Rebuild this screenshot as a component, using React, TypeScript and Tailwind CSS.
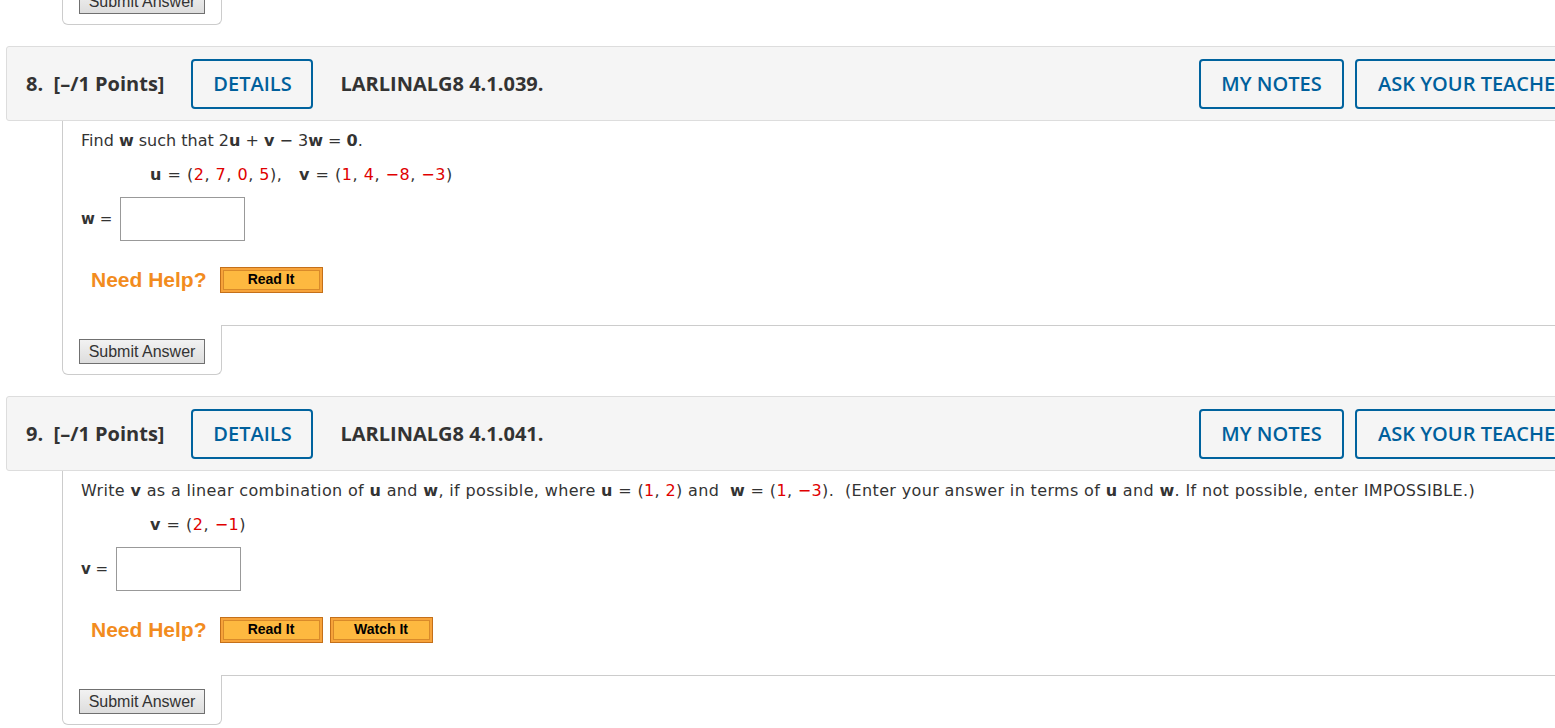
import React from "react";

const mathFont = { fontFamily: '"DejaVu Sans", Verdana, sans-serif' };

function R({ children }: { children: React.ReactNode }) {
  return <span className="text-[#e00000]">{children}</span>;
}

function B({ children }: { children: React.ReactNode }) {
  return <b className="font-bold">{children}</b>;
}

function HelpButton({ label }: { label: string }) {
  return (
    <button className="h-[26px] w-[103px] border border-[#c4701a] bg-[#f7a33a] p-[2px]">
      <span className="flex h-full w-full items-center justify-center border border-[#d98a2a] bg-[#fdb940] font-['Liberation_Sans',Arial,sans-serif] text-[14px] font-bold text-black">
        {label}
      </span>
    </button>
  );
}

function SubmitTab({ top }: { top?: boolean }) {
  return (
    <div className={`flex ${top ? "-mt-[25px]" : ""}`}>
      <div className="flex h-[50px] w-[160px] items-center rounded-b-[6px] border-x border-b border-[#cccccc] pl-[16px] pt-[4px]">
        <button className="h-[25px] w-[126px] border border-[#707070] bg-gradient-to-b from-[#f2f2f2] to-[#dddddd] font-['Liberation_Sans',Arial,sans-serif] text-[16px] leading-none text-[#333]">
          Submit Answer
        </button>
      </div>
      {!top && <div className="flex-1 border-t border-[#cccccc]" />}
    </div>
  );
}

function Header({ num, code }: { num: string; code: string }) {
  const btn =
    "flex h-[50px] items-center justify-center rounded-[4px] border-2 border-[#00639e] text-[20px] font-semibold text-[#00609c] bg-[#f5f5f5]";
  return (
    <div className="flex h-[75px] items-center rounded-[3px] border border-[#dddddd] bg-[#f5f5f5] pl-[19px] font-['Open_Sans',sans-serif] text-[#333]">
      <span className="text-[20px] font-bold">
        {num}.&nbsp;&nbsp;[–/1 Points]
      </span>
      <div className={`${btn} ml-[27px] w-[122px]`}>DETAILS</div>
      <span className="ml-[27px] text-[20px] font-bold">{code}</span>
      <div className={`${btn} ml-auto w-[145px]`}>MY NOTES</div>
      <div className={`${btn} ml-[11px] w-[236px] whitespace-nowrap`}>ASK YOUR TEACHER</div>
      <div className="w-[28px]" />
    </div>
  );
}

function Body({
  line1,
  line1Class,
  line2,
  label,
  buttons,
}: {
  line1: React.ReactNode;
  line1Class: string;
  line2: React.ReactNode;
  label: React.ReactNode;
  buttons: string[];
}) {
  return (
    <div className="ml-[56px]">
      <div className="h-[204px] border-l border-[#cccccc] pl-[18px] pt-[10px] text-[16px] text-[#333]" style={mathFont}>
        <div className={`h-[20px] leading-[20px] whitespace-nowrap ${line1Class}`}>{line1}</div>
        <div className="mt-[14px] h-[20px] pl-[69px] leading-[20px] whitespace-nowrap tracking-[0.5px]">{line2}</div>
        <div className="mt-[12px] flex items-center">
          <span className="text-[15px]">{label}</span>
          <div className="ml-[8px] h-[44px] w-[125px] border border-[#999] bg-white" />
        </div>
        <div className="mt-[23px] flex items-center pl-[10px]">
          <span className="font-['Liberation_Sans',Arial,sans-serif] text-[21px] font-bold text-[#f28c1e]">
            Need Help?
          </span>
          <div className="ml-[13px] flex gap-[7px]">
            {buttons.map((b) => (
              <HelpButton key={b} label={b} />
            ))}
          </div>
        </div>
      </div>
      <SubmitTab />
    </div>
  );
}

export default function App() {
  return (
    <div className="h-[728px] w-[1555px] overflow-hidden bg-white">
      <div className="w-[1620px] pl-[6px]">
        <div className="ml-[56px]">
          <SubmitTab top />
        </div>
        <div className="mt-[21px]">
          <Header num="8" code="LARLINALG8 4.1.039." />
          <Body
            line1Class=""
            line1={
              <>
                Find <B>w</B> such that 2<B>u</B> + <B>v</B> − 3<B>w</B> = <B>0</B>.
              </>
            }
            line2={
              <>
                <B>u</B> = (<R>2</R>, <R>7</R>, <R>0</R>, <R>5</R>),&nbsp;&nbsp; <B>v</B> = (<R>1</R>, <R>4</R>,{" "}
                <R>−8</R>, <R>−3</R>)
              </>
            }
            label={
              <>
                <B>w</B> =
              </>
            }
            buttons={["Read It"]}
          />
        </div>
        <div className="mt-[21px]">
          <Header num="9" code="LARLINALG8 4.1.041." />
          <Body
            line1Class="tracking-[0.35px]"
            line1={
              <>
                Write <B>v</B> as a linear combination of <B>u</B> and <B>w</B>, if possible, where <B>u</B> = (
                <R>1</R>, <R>2</R>) and&nbsp; <B>w</B> = (<R>1</R>, <R>−3</R>).&nbsp; (Enter your answer in terms of{" "}
                <B>u</B> and <B>w</B>. If not possible, enter IMPOSSIBLE.)
              </>
            }
            line2={
              <>
                <B>v</B> = (<R>2</R>, <R>−1</R>)
              </>
            }
            label={
              <>
                <B>v</B> =
              </>
            }
            buttons={["Read It", "Watch It"]}
          />
        </div>
      </div>
    </div>
  );
}
